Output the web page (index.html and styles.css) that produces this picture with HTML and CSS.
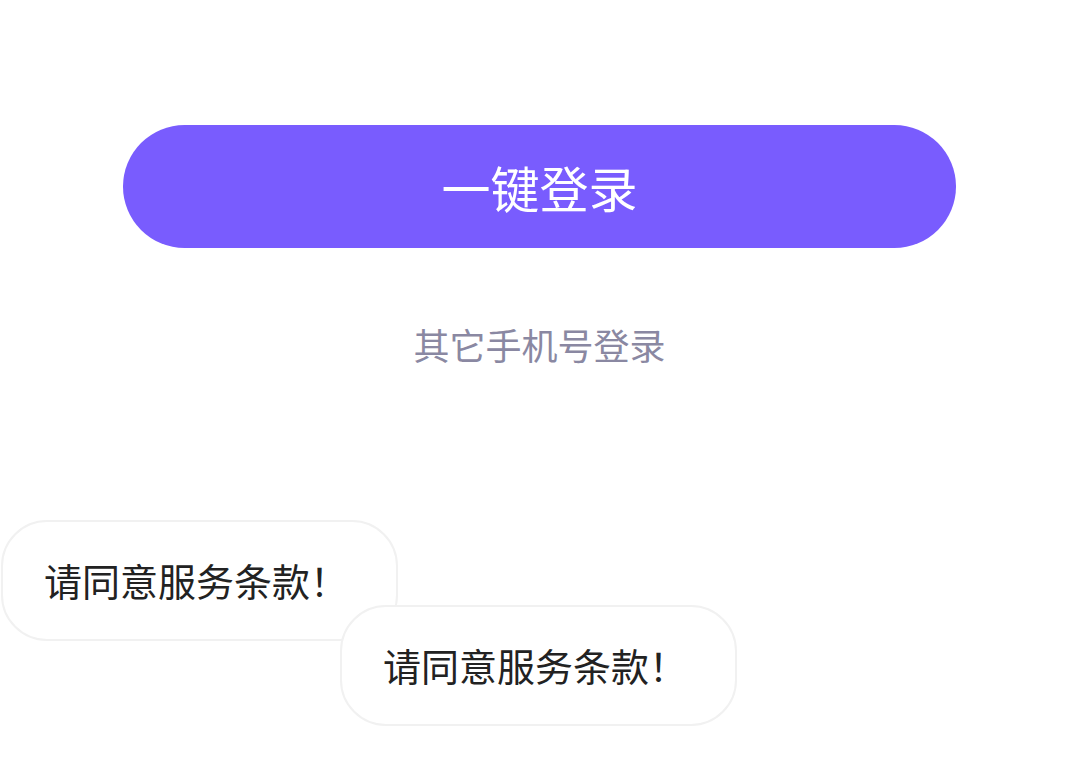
FILE: index.html
```html
<!DOCTYPE html>
<html lang="zh-CN">
<head>
<meta charset="utf-8">
<link rel="stylesheet" href="styles.css">
</head>
<body>
<main class="page">
  <button class="login-btn">一键登录</button>
  <a class="other-login">其它手机号登录</a>
</main>
<div class="toast toast-a">请同意服务条款！</div>
<div class="toast toast-b">请同意服务条款！</div>
</body>
</html>
```
FILE: styles.css
```css
html, body {
  margin: 0;
  padding: 0;
  background: #ffffff;
}
body {
  width: 1079px;
  height: 771px;
  position: relative;
  overflow: hidden;
  font-family: "Noto Sans CJK SC", "Noto Sans", sans-serif;
}
.page {
  display: flex;
  flex-direction: column;
  align-items: center;
  padding-top: 125px;
}
.login-btn {
  width: 833px;
  height: 123px;
  border: none;
  border-radius: 62px;
  background: #795cfe;
  color: #ffffff;
  font-family: inherit;
  font-size: 49px;
  line-height: 1;
  padding: 0;
  display: flex;
  align-items: center;
  justify-content: center;
}
.other-login {
  margin-top: 78px;
  font-size: 36px;
  line-height: 36px;
  color: #8a88a2;
}
.toast {
  position: absolute;
  box-sizing: border-box;
  width: 397px;
  height: 121px;
  padding-left: 41px;
  padding-bottom: 2px;
  display: flex;
  align-items: center;
  background: #ffffff;
  border: 2px solid #f1f1f1;
  border-radius: 46px;
  font-size: 38px;
  color: #222222;
}
.toast-a {
  left: 1px;
  top: 520px;
}
.toast-b {
  left: 340px;
  top: 605px;
}
```
